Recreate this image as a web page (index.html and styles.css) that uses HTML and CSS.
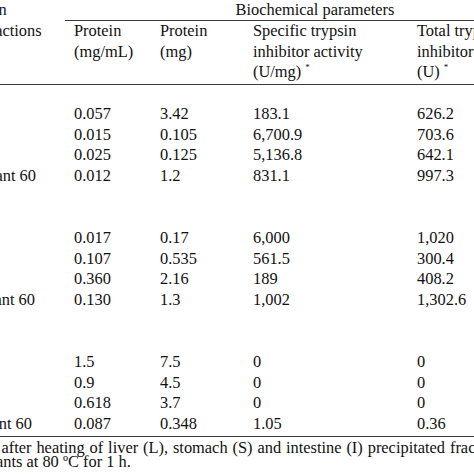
FILE: index.html
```html
<!DOCTYPE html>
<html>
<head>
<meta charset="utf-8">
<link rel="stylesheet" href="styles.css">
</head>
<body>
<div class="page">
  <div class="head">
    <div class="head-row1">
      <div class="c1"><span class="cut-n">n</span></div>
      <div class="span-head">Biochemical parameters</div>
    </div>
    <div class="head-row2">
      <div class="c1"><span class="cut-a">actions</span></div>
      <div class="cell">Protein<br>(mg/mL)</div>
      <div class="cell">Protein<br>(mg)</div>
      <div class="cell">Specific trypsin<br>inhibitor activity<br>(U/mg) <sup class="ast">*</sup></div>
      <div class="cell">Total trypsin<br>inhibitor activity<br>(U) <sup class="ast">*</sup></div>
    </div>
  </div>

  <div class="body">
    <div class="group first">
      <div class="row"><div class="c1"></div><div class="cell">0.057</div><div class="cell">3.42</div><div class="cell">183.1</div><div class="cell">626.2</div></div>
      <div class="row"><div class="c1"></div><div class="cell">0.015</div><div class="cell">0.105</div><div class="cell">6,700.9</div><div class="cell">703.6</div></div>
      <div class="row"><div class="c1"></div><div class="cell">0.025</div><div class="cell">0.125</div><div class="cell">5,136.8</div><div class="cell">642.1</div></div>
      <div class="row"><div class="c1"><span class="cut-g1">ant 60</span></div><div class="cell">0.012</div><div class="cell">1.2</div><div class="cell">831.1</div><div class="cell">997.3</div></div>
    </div>
    <div class="group">
      <div class="row"><div class="c1"></div><div class="cell">0.017</div><div class="cell">0.17</div><div class="cell">6,000</div><div class="cell">1,020</div></div>
      <div class="row"><div class="c1"></div><div class="cell">0.107</div><div class="cell">0.535</div><div class="cell">561.5</div><div class="cell">300.4</div></div>
      <div class="row"><div class="c1"></div><div class="cell">0.360</div><div class="cell">2.16</div><div class="cell">189</div><div class="cell">408.2</div></div>
      <div class="row"><div class="c1"><span class="cut-g2">ant 60</span></div><div class="cell">0.130</div><div class="cell">1.3</div><div class="cell">1,002</div><div class="cell">1,302.6</div></div>
    </div>
    <div class="group last">
      <div class="row"><div class="c1"></div><div class="cell">1.5</div><div class="cell">7.5</div><div class="cell">0</div><div class="cell">0</div></div>
      <div class="row"><div class="c1"></div><div class="cell">0.9</div><div class="cell">4.5</div><div class="cell">0</div><div class="cell">0</div></div>
      <div class="row"><div class="c1"></div><div class="cell">0.618</div><div class="cell">3.7</div><div class="cell">0</div><div class="cell">0</div></div>
      <div class="row"><div class="c1"><span class="cut-g3">nt 60</span></div><div class="cell">0.087</div><div class="cell">0.348</div><div class="cell">1.05</div><div class="cell">0.36</div></div>
    </div>
  </div>

  <div class="foot">
    <div class="foot-line1">after heating of liver (L), stomach (S) and intestine (I) precipitated fractions and</div>
    <div class="foot-line2"><span class="cut-f">ants at 80 ºC for 1 h.</span></div>
  </div>
</div>
</body>
</html>
```

FILE: styles.css
```css
html, body {
  margin: 0;
  padding: 0;
  background: #ffffff;
}
body {
  width: 474px;
  height: 474px;
  overflow: hidden;
}
.page {
  width: 565px;
  font-family: "Liberation Serif", "Times New Roman", serif;
  font-size: 16.4px;
  color: #111111;
}
.head-row1,
.head-row2,
.row {
  display: grid;
  grid-template-columns: 65px 86px 93px 164px 157px;
}
.c1 {
  overflow: hidden;
  white-space: nowrap;
}
.cell {
  padding-left: 9px;
  white-space: nowrap;
}
.head-row1 {
  line-height: 20px;
}
.span-head {
  grid-column: 2 / 6;
  text-align: center;
  border-bottom: 1px solid #3a3a3a;
}
.head-row2 {
  line-height: 20.5px;
  border-bottom: 1px solid #3a3a3a;
  padding-bottom: 1px;
}
.ast {
  font-size: 9px;
  line-height: 0;
  vertical-align: 7px;
}
.row {
  line-height: 20.67px;
}
.group {
  padding-top: 41.34px;
}
.group.first {
  padding-top: 19.5px;
}
.body {
  border-bottom: 1px solid #3a3a3a;
  padding-bottom: 1.3px;
}
.cut-n { display: inline-block; margin-left: -1.5px; }
.cut-a { display: inline-block; margin-left: -4.8px; }
.cut-g1 { display: inline-block; margin-left: -4.5px; }
.cut-g2 { display: inline-block; margin-left: -5.5px; }
.cut-g3 { display: inline-block; margin-left: -1.3px; }
.foot {
  padding-top: 3.5px;
  line-height: 14px;
  white-space: nowrap;
}
.foot-line1 {
  padding-left: 1.5px;
  word-spacing: 0.8px;
}
.cut-f {
  display: inline-block;
  margin-left: -4px;
}
```
